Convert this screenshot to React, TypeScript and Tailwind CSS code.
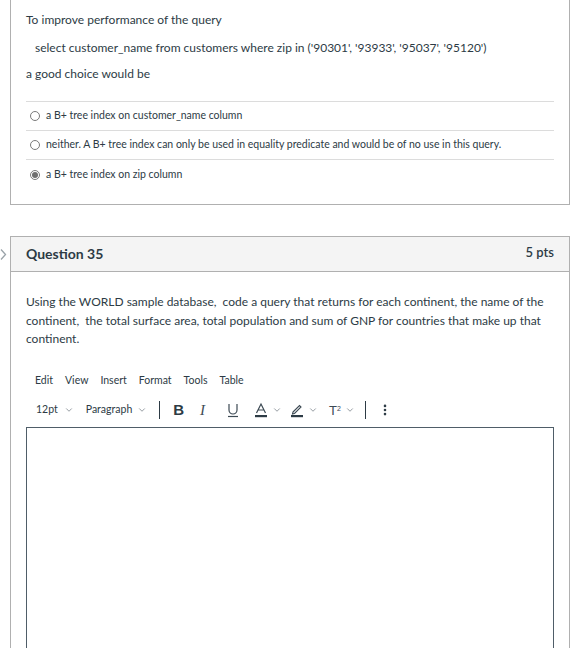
import { ChevronDown, EllipsisVertical } from "lucide-react";

const FONT = { fontFamily: "Lato, 'Open Sans', 'Liberation Sans', sans-serif" };

function Radio({ checked }: { checked?: boolean }) {
  return (
    <span className="flex h-[10px] w-[10px] shrink-0 items-center justify-center rounded-full border border-[#7a7a7a] bg-white">
      {checked && <span className="h-[6px] w-[6px] rounded-full bg-[#6f6f6f]" />}
    </span>
  );
}

const options = [
  { label: "a B+ tree index on customer_name column", checked: false },
  {
    label: "neither. A B+ tree index can only be used in equality predicate and would be of no use in this query.",
    checked: false,
  },
  { label: "a B+ tree index on zip column", checked: true },
];

function Caret() {
  return <ChevronDown className="h-[10px] w-[10px] text-[#56626b]" strokeWidth={1.5} />;
}

export default function App() {
  return (
    <div className="relative min-h-[648px] overflow-hidden bg-white text-[#2d3b45]" style={FONT}>
      {/* previous question (cut off at top) */}
      <div className="ml-[10px] w-[560px] border-x border-b border-[#b0b0b0] px-[15px] pb-[15px] pt-[11px]">
        <div className="text-[12px] leading-[18px]">To improve performance of the query</div>
        <div className="mt-[10px] pl-[9px] text-[12px] leading-[18px]">
          select customer_name from customers where zip in ('90301', '93933', '95037', '95120')
        </div>
        <div className="mt-[8px] text-[12px] leading-[18px]">a good choice would be</div>
        <div className="mt-[18px] w-[528px] border-t border-[#dcdcdc]">
          {options.map((o) => (
            <div
              key={o.label}
              className="flex h-[29px] items-center gap-[6px] border-b border-[#dcdcdc] pl-[4px] text-[10.5px] last:border-b-0"
            >
              <Radio checked={o.checked} />
              <span>{o.label}</span>
            </div>
          ))}
        </div>
      </div>

      {/* Question 35 */}
      <div className="relative mt-[31px] ml-[10px] w-[560px] border border-b-0 border-[#b0b0b0]">
        <svg
          className="absolute left-[-12px] top-[11px]"
          width="8"
          height="13"
          viewBox="0 0 8 13"
          fill="none"
          stroke="#9aa3a9"
          strokeWidth="1.3"
        >
          <path d="M2 1.5 L6.5 6.5 L2 11.5" />
        </svg>
        <div className="flex h-[35px] items-center justify-between border-b border-[#b0b0b0] bg-[#f4f4f4] px-[15px]">
          <span className="pb-[2px] text-[14px] font-bold text-[#2d3b45]">Question 35</span>
          <span className="pb-[2px] text-[13px] font-semibold text-[#2d3b45]">5 pts</span>
        </div>
        <div className="px-[15px] pt-[21px] pb-[400px]">
          <p className="w-[530px] text-[12px] leading-[18.5px]">
            Using the WORLD sample database,&nbsp; code a query that returns for each continent, the name of the
            continent,&nbsp; the total surface area, total population and sum of GNP for countries that make up that
            continent.
          </p>

          <div className="mt-[24px] flex gap-[12px] pl-[9px] text-[10.5px] text-[#2d3b45]">
            <span>Edit</span>
            <span>View</span>
            <span>Insert</span>
            <span>Format</span>
            <span>Tools</span>
            <span>Table</span>
          </div>

          <div className="mt-[11px] flex h-[22px] items-center pl-[10px] text-[10.5px]">
            <span>12pt</span>
            <span className="ml-[6px]">
              <Caret />
            </span>
            <span className="ml-[12px]">Paragraph</span>
            <span className="ml-[5px]">
              <Caret />
            </span>
            <span className="ml-[12px] h-[18px] w-[1px] bg-[#2d3b45]" />
            <span className="ml-[13px] text-[15px] font-bold" style={{ fontFamily: "'Liberation Sans', sans-serif" }}>
              B
            </span>
            <span
              className="ml-[16px] text-[15px] italic text-[#3d4a54]"
              style={{ fontFamily: "'Liberation Serif', serif" }}
            >
              I
            </span>
            <svg className="ml-[22px]" width="12" height="16" viewBox="0 0 12 16" fill="none" stroke="#3d4a54" strokeWidth="1.2">
              <path d="M2 2 V8 a4 4 0 0 0 8 0 V2" />
              <path d="M1 14.5 H11" />
            </svg>
            <svg className="ml-[15px]" width="14" height="16" viewBox="0 0 14 16" fill="none">
              <path d="M2.5 11 L7 2 L11.5 11 M4 8 H10" stroke="#3d4a54" strokeWidth="1.2" />
              <rect x="1" y="13" width="12" height="2.2" fill="#2d3b45" />
            </svg>
            <span className="ml-[4px]">
              <Caret />
            </span>
            <svg className="ml-[8px]" width="14" height="16" viewBox="0 0 14 16" fill="none">
              <path d="M3 10 L9.5 3.5 L11 5 L4.5 11.5 L2.5 12 Z" stroke="#3d4a54" strokeWidth="1.1" />
              <rect x="1" y="13" width="12" height="2.2" fill="#2d3b45" />
            </svg>
            <span className="ml-[4px]">
              <Caret />
            </span>
            <span className="ml-[11px] text-[13px] text-[#3d4a54]" style={{ fontFamily: "'Liberation Sans', sans-serif" }}>
              T<sup className="text-[7px]">2</sup>
            </span>
            <span className="ml-[4px]">
              <Caret />
            </span>
            <span className="ml-[10px] h-[18px] w-[1px] bg-[#2d3b45]" />
            <EllipsisVertical className="ml-[12px] h-[14px] w-[14px] text-[#2d3b45]" strokeWidth={2.5} />
          </div>

          <div className="mt-[6px] h-[240px] w-[528px] border border-[#4f5d68]" />
        </div>
      </div>
    </div>
  );
}
